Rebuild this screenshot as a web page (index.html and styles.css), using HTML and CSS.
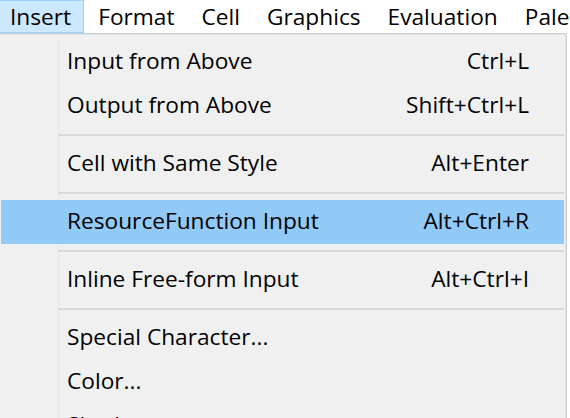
FILE: index.html
```html
<!DOCTYPE html>
<html>
<head>
<meta charset="utf-8">
<link rel="stylesheet" href="styles.css">
</head>
<body>
<div class="menubar">
  <div class="mb-item active">Insert</div>
  <div class="mb-item">Format</div>
  <div class="mb-item">Cell</div>
  <div class="mb-item">Graphics</div>
  <div class="mb-item">Evaluation</div>
  <div class="mb-item">Palettes</div>
</div>
<div class="dropdown">
  <div class="list">
    <div class="item"><span class="label">Input from Above</span><span class="key">Ctrl+L</span></div>
    <div class="item"><span class="label">Output from Above</span><span class="key">Shift+Ctrl+L</span></div>
    <div class="sep"></div>
    <div class="item"><span class="label">Cell with Same Style</span><span class="key">Alt+Enter</span></div>
    <div class="sep"></div>
    <div class="item hover"><span class="label">ResourceFunction Input</span><span class="key">Alt+Ctrl+R</span></div>
    <div class="sep"></div>
    <div class="item"><span class="label">Inline Free-form Input</span><span class="key">Alt+Ctrl+I</span></div>
    <div class="sep"></div>
    <div class="item"><span class="label">Special Character...</span><span class="key"></span></div>
    <div class="item"><span class="label">Color...</span><span class="key"></span></div>
    <div class="item"><span class="label">Shade...</span><span class="key"></span></div>
  </div>
</div>
</body>
</html>
```

FILE: styles.css
```css
html, body {
  margin: 0;
  padding: 0;
  background: #ffffff;
  overflow: hidden;
}
body {
  width: 570px;
  height: 418px;
  font-family: "Open Sans", "Noto Sans", sans-serif;
  font-size: 22.7px;
  color: #000000;
}
.menubar {
  display: flex;
  height: 33px;
  background: #ffffff;
  margin-left: -3px;
  white-space: nowrap;
  overflow: hidden;
}
.mb-item {
  box-sizing: border-box;
  height: 33px;
  padding: 0 12px 1px;
  margin-right: 1px;
  display: flex;
  align-items: center;
  border: 1px solid transparent;
  flex: none;
}
.mb-item.active {
  background: #cce8ff;
  border-color: #99d1ff;
}
.dropdown {
  box-sizing: border-box;
  width: 567px;
  height: 385px;
  background: #f0f0f0;
  border-top: 1px solid #cccccc;
  border-right: 1px solid #cccccc;
  box-shadow: inset 0 1px 0 #e2e2e2, inset -1px 0 0 #e2e2e2;
  padding: 6px 2px 0 1px;
  overflow: hidden;
}
.list {
  display: flex;
  flex-direction: column;
  background: linear-gradient(to right, transparent 57px, #e6e6e6 57px, #e6e6e6 58px, transparent 58px);
  min-height: 100%;
}
.item {
  box-sizing: border-box;
  height: 44px;
  display: flex;
  align-items: center;
  justify-content: space-between;
  padding: 0 35px 3px 66px;
  white-space: nowrap;
  flex: none;
}
.item.hover {
  background: #91c9f7;
}
.sep {
  height: 14px;
  flex: none;
  margin-left: 57px;
  display: flex;
  align-items: center;
}
.sep::before {
  content: "";
  display: block;
  width: 100%;
  height: 2px;
  background: #d9d9d9;
}
```
